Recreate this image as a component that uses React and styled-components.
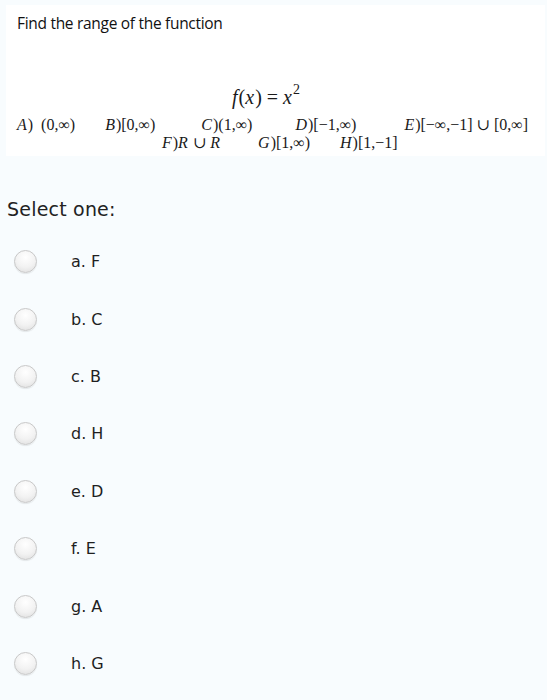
import React from "react"
import styled, { createGlobalStyle } from "styled-components"

const Global = createGlobalStyle`
  html, body {
    margin: 0;
    padding: 0;
    background: #f8fcfe;
  }
  body {
    font-family: "Open Sans", "Liberation Sans", sans-serif;
    color: #222;
  }
`

const Page = styled.div`
  width: 547px;
  height: 700px;
  overflow: hidden;
  padding-top: 5px;
  box-sizing: border-box;
`

const QuestionCard = styled.div`
  margin: 0 2px 0 6px;
  height: 151px;
  background: #fff;
`

const Prompt = styled.div`
  padding: 7px 0 0 11px;
  font-size: 15.5px;
  letter-spacing: -0.3px;
  color: #111;
`

const MathLine = styled.div`
  font-family: "Liberation Serif", "DejaVu Serif", serif;
  font-size: 16px;
  color: #1a1a1a;
  display: flex;
  white-space: nowrap;
  margin-top: ${p => p.top}px;
  line-height: 18px;
`

const Item = styled.span`
  margin-left: ${p => p.left}px;
`

const I = styled.i`
  padding-right: 1px;
`

const Formula = styled(MathLine)`
  font-size: 20px;
  line-height: 22px;
  padding-left: 226px;
`

const Sup = styled.span`
  font-size: 14px;
  position: relative;
  top: -7px;
`

const SelectLabel = styled.div`
  font-family: "DejaVu Sans", "Liberation Sans", sans-serif;
  font-size: 19px;
  letter-spacing: 0.2px;
  color: #222;
  margin: 42px 0 0 7px;
`

const Options = styled.div`
  display: flex;
  flex-direction: column;
  gap: 29.8px;
  margin-top: 28px;
  padding-left: 14px;
`

const Option = styled.label`
  display: flex;
  align-items: center;
  height: 27.6px;
`

const Radio = styled.span`
  width: 21px;
  height: 21px;
  border-radius: 50%;
  border: 1px solid #c8c8c8;
  background: radial-gradient(circle at 50% 30%, #ffffff 0%, #f2f2f2 55%, #dcdcdc 100%);
  box-shadow: 0 1px 1px rgba(0, 0, 0, 0.08);
  flex-shrink: 0;
`

const OptionText = styled.span`
  margin-left: 34px;
  font-family: "DejaVu Sans", "Liberation Sans", sans-serif;
  font-size: 16px;
  color: #1f1f1f;
`

const answers = ["a. F", "b. C", "c. B", "d. H", "e. D", "f. E", "g. A", "h. G"]

export default function App() {
  return (
    <Page>
      <Global />
      <QuestionCard>
        <Prompt>Find the range of the function</Prompt>
        <Formula top={52}>
          <I>f</I>(<I>x</I>)&nbsp;=&nbsp;<I>x</I><Sup>2</Sup>
        </Formula>
        <MathLine top={8}>
          <Item left={11}><I>A</I>)&nbsp;&nbsp;(0,∞)</Item>
          <Item left={30}><I>B</I>)[0,∞)</Item>
          <Item left={46}><I>C</I>)(1,∞)</Item>
          <Item left={43}><I>D</I>)[−1,∞)</Item>
          <Item left={48}><I>E</I>)[−∞,−1] ∪ [0,∞]</Item>
        </MathLine>
        <MathLine top={0}>
          <Item left={156}><I>F</I>)<I>R</I> ∪ <I>R</I></Item>
          <Item left={37}><I>G</I>)[1,∞)</Item>
          <Item left={30}><I>H</I>)[1,−1]</Item>
        </MathLine>
      </QuestionCard>
      <SelectLabel>Select one:</SelectLabel>
      <Options>
        {answers.map(a => (
          <Option key={a}>
            <Radio />
            <OptionText>{a}</OptionText>
          </Option>
        ))}
      </Options>
    </Page>
  )
}
